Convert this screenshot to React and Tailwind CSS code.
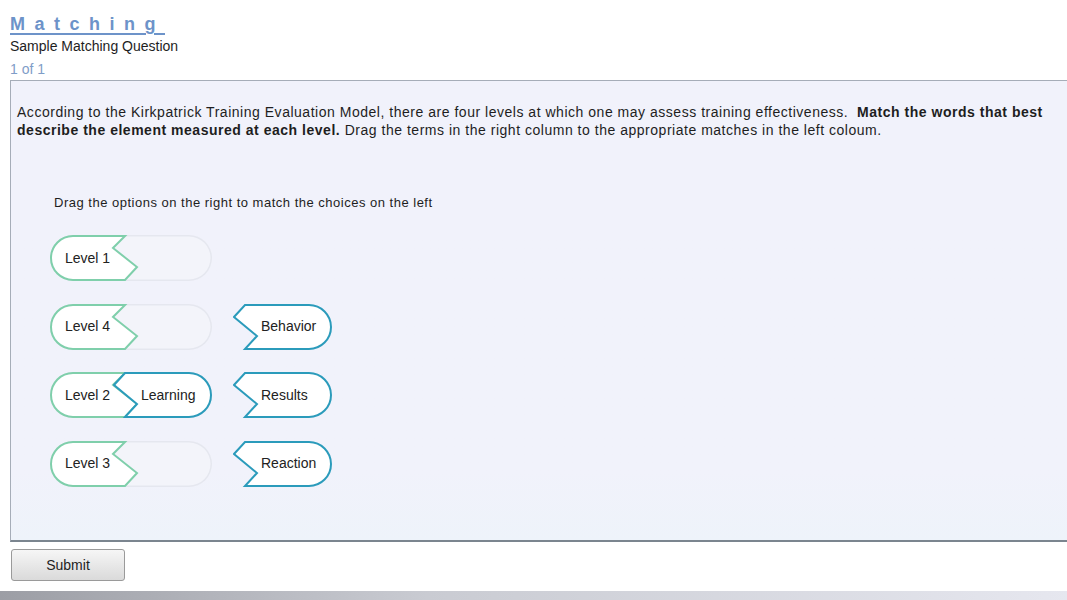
import React from "react";

const GREEN = "#7fcfab";
const TEAL = "#2b9bbb";

function LevelPiece({ label }) {
  return (
    <div className="relative w-[90px] h-[46px] flex items-center pl-[15px] shrink-0">
      <svg className="absolute left-0 top-0" width="90" height="46" viewBox="0 0 90 46">
        <path d="M23 1H75L63 13L87 32L75 45H23A22 22 0 0 1 23 1Z" fill="#ffffff" stroke={GREEN} strokeWidth="2" />
      </svg>
      <span className="relative text-[14px] text-[#222]">{label}</span>
    </div>
  );
}

function TermPiece({ label, className = "" }) {
  return (
    <div className={"relative w-[100px] h-[46px] flex items-center pl-[28px] shrink-0 " + className}>
      <svg className="absolute left-0 top-0" width="100" height="46" viewBox="0 0 100 46">
        <path d="M12 1H76A22 22 0 0 1 76 45H12L24 32L1 13Z" fill="#ffffff" stroke={TEAL} strokeWidth="2" />
      </svg>
      <span className="relative text-[14px] text-[#222]">{label}</span>
    </div>
  );
}

function Row({ level, matched, term }) {
  return (
    <div className="flex items-center gap-[21px]">
      <div className="flex w-[162px] h-[46px] rounded-full shadow-[inset_0_0_0_1.5px_#e5e7ef] bg-[#f3f4fa]">
        <LevelPiece label={level} />
        {matched && <TermPiece label={matched} className="ml-[-27px]" />}
      </div>
      {term && <TermPiece label={term} />}
    </div>
  );
}

export default function App() {
  return (
    <div className="w-[1067px] h-[600px] overflow-hidden bg-white flex flex-col" style={{ fontFamily: '"Liberation Sans", Arial, sans-serif' }}>
      <div className="pl-[10px] pt-[13px]">
        <div className="text-[18px] leading-[22px] font-bold tracking-[9.5px] text-[#6d93c9] underline decoration-[2px] underline-offset-[3px]">
          <span>Matching</span>
        </div>
        <div className="mt-[3px] text-[14px] leading-[16px] text-[#1e1e1e]">Sample Matching Question</div>
        <div className="mt-[7px] text-[14px] leading-[16px] text-[#7f9dc8]">1 of 1</div>
      </div>
      <div className="mt-[3px] ml-[10px] h-[462px] shrink-0 border-l border-t border-[#a6adb8] border-b-2 border-b-[#7b858f] bg-gradient-to-b from-[#f1f2fb] from-85% to-[#eef3fa] pl-[6px] pr-[12px] pt-[22px]">
        <p className="text-[14px] leading-[18px] tracking-[0.52px] text-[#1e1e1e]">
          According to the Kirkpatrick Training Evaluation Model, there are four levels at which one may assess training effectiveness.&nbsp; <b>Match the words that best describe the element measured at each level.</b> Drag the terms in the right column to the appropriate matches in the left coloum.
        </p>
        <div className="mt-[56px] ml-[37px] text-[13px] leading-[16px] tracking-[0.5px] text-[#1e1e1e]">
          Drag the options on the right to match the choices on the left
        </div>
        <div className="mt-[24px] ml-[33px] flex flex-col gap-[22.5px]">
          <Row level="Level 1" />
          <Row level="Level 4" term="Behavior" />
          <Row level="Level 2" matched="Learning" term="Results" />
          <Row level="Level 3" term="Reaction" />
        </div>
      </div>
      <div className="mt-[7px] ml-[11px]">
        <button className="w-[114px] h-[32px] rounded-[3px] border border-[#9a9a9a] bg-gradient-to-b from-[#f6f6f6] to-[#dadada] text-[14px] text-[#1e1e1e]">
          Submit
        </button>
      </div>
      <div className="mt-auto h-[9px] bg-gradient-to-r from-[#9c9ea5] via-[#c9cbd2] via-40% to-[#e6e7ef]"></div>
    </div>
  );
}
